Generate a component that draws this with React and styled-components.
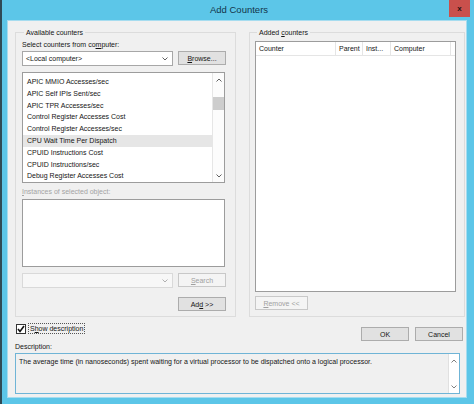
import React from "react";
import styled, { createGlobalStyle } from "styled-components";

const Global = createGlobalStyle`
	html, body {
		margin: 0;
		padding: 0;
		background: #5cc6e8;
	}
	body {
		font-family: "Liberation Sans", Arial, sans-serif;
		font-size: 7px;
		color: #151515;
	}
`;

const Window = styled.div`
	width: 474px;
	height: 404px;
	box-sizing: border-box;
	display: flex;
	flex-direction: column;
	background: #5cc6e8;
	border-left: 2px solid #2f4a55;
`;

const TitleBar = styled.div`
	height: 20px;
	display: grid;
	grid-template-columns: 1fr auto 1fr;
	align-items: start;
`;

const Title = styled.div`
	grid-column: 2;
	font-size: 9.5px;
	line-height: 20px;
	color: #13354a;
	padding-left: 2px;
`;

const CloseButton = styled.div`
	grid-column: 3;
	justify-self: end;
	margin-right: 4px;
	width: 21px;
	height: 17px;
	background: #c9504c;
	color: #2a1414;
	font-weight: bold;
	font-size: 8px;
	display: flex;
	align-items: center;
	justify-content: center;
`;

const Client = styled.div`
	flex: 1;
	margin: 0 7px 6px 5px;
	background: #f0f0f0;
	border: 1px solid #a6dcef;
	padding: 7px 3px 0 7px;
	display: flex;
	flex-direction: column;
`;

const Groups = styled.div`
	display: flex;
	gap: 13px;
	height: 289px;
`;

const Group = styled.fieldset`
	margin: 0;
	width: ${(p) => p.$width}px;
	box-sizing: border-box;
	border: 1px solid #dcdcdc;
	padding: ${(p) => p.$pad};
	display: flex;
	flex-direction: column;
`;

const Legend = styled.legend`
	padding: 0 2px;
	margin-left: 2px;
	line-height: 9px;
`;

const Label = styled.div`
	line-height: 9px;
	color: ${(p) => (p.$disabled ? "#a3a3a3" : "#151515")};
	margin-top: ${(p) => p.$top || 0}px;
`;

const Row = styled.div`
	display: flex;
	gap: 5px;
	margin-top: ${(p) => p.$top || 0}px;
	justify-content: ${(p) => (p.$end ? "flex-end" : "flex-start")};
`;

const Combo = styled.div`
	width: 151px;
	height: 15px;
	box-sizing: border-box;
	border: 1px solid ${(p) => (p.$disabled ? "#d9d9d9" : "#a7a7a7")};
	background: ${(p) => (p.$disabled ? "#f7f7f7" : "#fff")};
	display: flex;
	align-items: center;
	justify-content: space-between;
	padding: 0 4px 0 3px;
	color: ${(p) => (p.$disabled ? "#b5b5b5" : "#151515")};
`;

const Button = styled.div`
	width: ${(p) => p.$width || 48}px;
	height: 14px;
	box-sizing: border-box;
	border: 1px solid ${(p) => (p.$disabled ? "#c8c8c8" : "#acacac")};
	background: ${(p) => (p.$disabled ? "#f4f4f4" : "#e1e1e1")};
	color: ${(p) => (p.$disabled ? "#a0a0a0" : "#151515")};
	display: flex;
	align-items: center;
	justify-content: center;
	margin-top: ${(p) => p.$top || 0}px;
`;

const ListBox = styled.div`
	width: 203px;
	height: 113px;
	box-sizing: border-box;
	border: 1px solid #9c9c9c;
	background: #fff;
	margin-top: 6px;
	display: flex;
`;

const Items = styled.div`
	flex: 1;
	padding-top: 3px;
	overflow: hidden;
`;

const Item = styled.div`
	height: 11.8px;
	line-height: 11.8px;
	padding-left: 4px;
	background: ${(p) => (p.$selected ? "#e6e6e6" : "transparent")};
`;

const ScrollBar = styled.div`
	width: 11px;
	border-left: 1px solid #e6e6e6;
	background: #fcfcfc;
	display: flex;
	flex-direction: column;
	align-items: center;
`;

const Arrow = styled.div`
	height: 13px;
	width: 100%;
	display: flex;
	align-items: center;
	justify-content: center;
`;

const Thumb = styled.div`
	width: 100%;
	height: 13px;
	background: #cdcdcd;
	margin-top: ${(p) => p.$top}px;
`;

const Spacer = styled.div`
	flex: 1;
`;

const InstancesBox = styled.div`
	width: 203px;
	height: 69px;
	box-sizing: border-box;
	border: 1px solid #9c9c9c;
	background: #fff;
	margin-top: 3px;
`;

const ListView = styled.div`
	width: 201px;
	height: 251px;
	box-sizing: border-box;
	border: 1px solid #9c9c9c;
	background: #fff;
	margin-top: 4px;
`;

const Header = styled.div`
	display: flex;
	height: 13px;
	border-bottom: 1px solid #e5e5e5;
`;

const Column = styled.div`
	width: ${(p) => p.$width}px;
	box-sizing: border-box;
	padding-left: 3px;
	line-height: 13px;
	border-right: 1px solid #e5e5e5;
	white-space: nowrap;
	overflow: hidden;
`;

const BottomRow = styled.div`
	display: flex;
	align-items: flex-start;
	justify-content: space-between;
	margin-top: 6px;
`;

const CheckLine = styled.div`
	display: flex;
	align-items: center;
	gap: 2px;
	margin-left: 1px;
`;

const CheckBox = styled.div`
	width: 10px;
	height: 10px;
	box-sizing: border-box;
	border: 1px solid #333;
	background: #fff;
	display: flex;
	align-items: center;
	justify-content: center;
`;

const Focus = styled.span`
	border: 1px dotted #555;
	padding: 0 1px;
	line-height: 9px;
`;

const Buttons = styled.div`
	display: flex;
	gap: 6px;
	margin-top: 4px;
`;

const DescBox = styled.div`
	height: 41px;
	box-sizing: border-box;
	margin: 2px 3px 0 0;
	border: 1px solid #6fb4d6;
	background: #f0f0f0;
	display: flex;
`;

const DescText = styled.div`
	flex: 1;
	padding: 3px 3px;
	line-height: 9px;
`;

const DescScroll = styled(ScrollBar)`
	width: 10px;
	background: #fff;
	border-left: 1px solid #e0e0e0;
`;

const U = styled.span`
	text-decoration: underline;
`;

const Chevron = ({ up, color = "#606060" }) => (
	<svg width="6" height="4" viewBox="0 0 6 4">
		<polyline
			points={up ? "0.5,3.5 3,1 5.5,3.5" : "0.5,0.5 3,3 5.5,0.5"}
			fill="none"
			stroke={color}
			strokeWidth="1"
		/>
	</svg>
);

const counters = [
	"APIC MMIO Accesses/sec",
	"APIC Self IPIs Sent/sec",
	"APIC TPR Accesses/sec",
	"Control Register Accesses Cost",
	"Control Register Accesses/sec",
	"CPU Wait Time Per Dispatch",
	"CPUID Instructions Cost",
	"CPUID Instructions/sec",
	"Debug Register Accesses Cost",
];

export default function App() {
	return (
		<>
			<Global />
			<Window>
				<TitleBar>
					<Title>Add Counters</Title>
					<CloseButton>x</CloseButton>
				</TitleBar>
				<Client>
					<Groups>
						<Group $width={220} $pad="0 9px 5px 6px">
							<Legend>Available counters</Legend>
							<Label $top={3}>
								Select counters from co<U>m</U>puter:
							</Label>
							<Row $top={2}>
								<Combo>
									<span>&lt;Local computer&gt;</span>
									<Chevron />
								</Combo>
								<Button>
									<span>
										<U>B</U>rowse...
									</span>
								</Button>
							</Row>
							<ListBox>
								<Items>
									{counters.map((c) => (
										<Item key={c} $selected={c.startsWith("CPU Wait")}>
											{c}
										</Item>
									))}
								</Items>
								<ScrollBar>
									<Arrow>
										<Chevron up />
									</Arrow>
									<Thumb $top={11} />
									<Spacer />
									<Arrow>
										<Chevron />
									</Arrow>
								</ScrollBar>
							</ListBox>
							<Label $disabled $top={4}>
								<U>I</U>nstances of selected object:
							</Label>
							<InstancesBox />
							<Row $top={6}>
								<Combo $disabled>
									<span />
									<Chevron color="#b0b0b0" />
								</Combo>
								<Button $disabled>
									<span>
										<U>S</U>earch
									</span>
								</Button>
							</Row>
							<Row $top={9} $end>
								<Button>
									<span>
										Ad<U>d</U> &gt;&gt;
									</span>
								</Button>
							</Row>
						</Group>
						<Group $width={215} $pad="0 8px 5px 5px">
							<Legend>
								Added <U>c</U>ounters
							</Legend>
							<ListView>
								<Header>
									<Column $width={80}>Counter</Column>
									<Column $width={27}>Parent</Column>
									<Column $width={28}>Inst...</Column>
									<Column $width={60}>Computer</Column>
								</Header>
							</ListView>
							<Row $top={4}>
								<Button $disabled $width={53}>
									<span>
										<U>R</U>emove &lt;&lt;
									</span>
								</Button>
							</Row>
						</Group>
					</Groups>
					<BottomRow>
						<CheckLine>
							<CheckBox>
								<svg width="8" height="8" viewBox="0 0 8 8">
									<polyline
										points="1,4 3,6.5 7,1"
										fill="none"
										stroke="#111"
										strokeWidth="1.6"
									/>
								</svg>
							</CheckBox>
							<Focus>
								S<U>h</U>ow description
							</Focus>
						</CheckLine>
						<Buttons>
							<Button>OK</Button>
							<Button>Cancel</Button>
						</Buttons>
					</BottomRow>
					<Label $top={1}>Description:</Label>
					<DescBox>
						<DescText>
							The average time (in nanoseconds) spent waiting for a virtual
							processor to be dispatched onto a logical processor.
						</DescText>
						<DescScroll>
							<Arrow>
								<Chevron up color="#808080" />
							</Arrow>
							<Spacer />
							<Arrow>
								<Chevron color="#808080" />
							</Arrow>
						</DescScroll>
					</DescBox>
				</Client>
			</Window>
		</>
	);
}
